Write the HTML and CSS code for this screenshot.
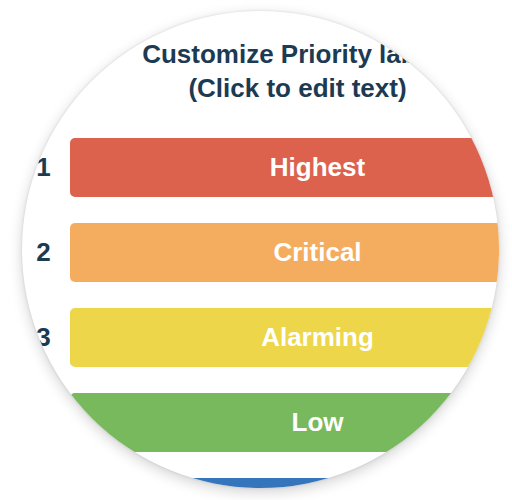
FILE: index.html
```html
<!DOCTYPE html>
<html lang="en">
<head>
<meta charset="utf-8">
<title>Customize Priority labels</title>
<link rel="stylesheet" href="styles.css">
</head>
<body>
<div class="stage">
  <div class="lens">
    <div class="panel">
      <h1 class="title">Customize Priority labels<br>(Click to edit text)</h1>
      <ol class="levels">
        <li class="level"><span class="num">1</span><span class="bar bar-red">Highest</span></li>
        <li class="level"><span class="num">2</span><span class="bar bar-orange">Critical</span></li>
        <li class="level"><span class="num">3</span><span class="bar bar-yellow">Alarming</span></li>
        <li class="level"><span class="num">4</span><span class="bar bar-green">Low</span></li>
        <li class="level"><span class="num"></span><span class="bar bar-blue"></span></li>
      </ol>
    </div>
  </div>
</div>
</body>
</html>
```

FILE: styles.css
```css
html, body {
  margin: 0;
  padding: 0;
  background: #ffffff;
}

body {
  font-family: "Liberation Sans", Arial, Helvetica, sans-serif;
  width: 512px;
  height: 500px;
  overflow: hidden;
}

.stage {
  padding: 11px 0 0 22px;
}

.lens {
  width: 477px;
  height: 477px;
  border-radius: 50%;
  overflow: hidden;
  background: #ffffff;
  box-shadow: 0 0 3px rgba(0, 0, 0, 0.12), 0 4px 14px rgba(0, 0, 0, 0.18);
}

.panel {
  width: 535px;
  padding: 26px 0 0 8px;
}

.title {
  margin: 0;
  font-size: 26px;
  line-height: 34px;
  font-weight: 700;
  color: #1d3a53;
  text-align: center;
}

.levels {
  list-style: none;
  margin: 33px 0 0 0;
  padding: 0;
  display: flex;
  flex-direction: column;
  gap: 26px;
}

.level {
  display: grid;
  grid-template-columns: 27px 495px;
  column-gap: 13px;
  align-items: center;
}

.num {
  text-align: center;
  font-size: 26px;
  font-weight: 700;
  color: #1d3a53;
}

.bar {
  height: 59px;
  border-radius: 5px;
  display: flex;
  align-items: center;
  justify-content: center;
  color: #ffffff;
  font-size: 26px;
  font-weight: 700;
}

.bar-red { background: #dc624d; }
.bar-orange { background: #f4ad5e; }
.bar-yellow { background: #edd649; }
.bar-green { background: #77b95c; }
.bar-blue { background: #3575bc; }
```
